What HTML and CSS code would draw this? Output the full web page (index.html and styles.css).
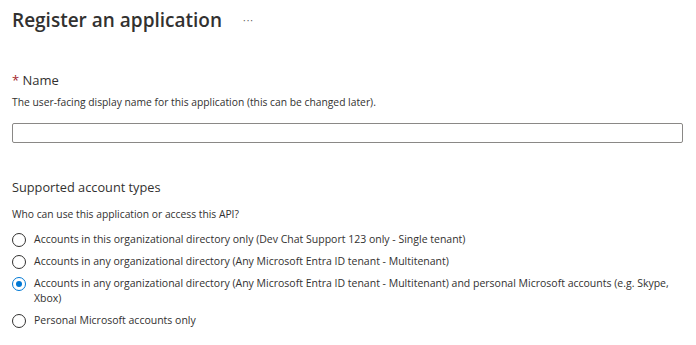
FILE: index.html
```html
<!DOCTYPE html>
<html>
<head>
    <meta charset="UTF-8">
    <title>Register an application</title>
    <link rel="stylesheet" href="styles.css">
</head>
<body>
    <div class="page">
        <div class="header">
            <h1>Register an application</h1>
            <span class="more">···</span>
        </div>

        <div class="section">
            <div class="label"><span class="req">*</span> Name</div>
            <div class="hint">The user-facing display name for this application (this can be changed later).</div>
            <input type="text" class="text-input">
        </div>

        <div class="section accounts">
            <div class="label">Supported account types</div>
            <div class="hint">Who can use this application or access this API?</div>
            <div class="radio-list">
                <label class="radio"><span class="dot"></span><span>Accounts in this organizational directory only (Dev Chat Support 123 only - Single tenant)</span></label>
                <label class="radio"><span class="dot"></span><span>Accounts in any organizational directory (Any Microsoft Entra ID tenant - Multitenant)</span></label>
                <label class="radio checked"><span class="dot"></span><span>Accounts in any organizational directory (Any Microsoft Entra ID tenant - Multitenant) and personal Microsoft accounts (e.g. Skype, Xbox)</span></label>
                <label class="radio"><span class="dot"></span><span>Personal Microsoft accounts only</span></label>
            </div>
        </div>
    </div>
</body>
</html>
```

FILE: styles.css
```css
body { margin: 0; background: #fff; font-family: "Open Sans", "Noto Sans", sans-serif; color: #323130; }
.page { padding: 0 13px 0 12px; }

.header { display: flex; align-items: center; height: 40px; }
h1 { margin: 0; font-size: 19px; font-weight: 600; color: #323130; }
.more { margin-left: 21px; font-size: 10px; color: #605e5c; letter-spacing: 1px; }

.section { margin-top: 31px; }
.label { font-size: 13px; line-height: 18px; }
.accounts .label { font-size: 12.75px; }
.req { color: #a4262c; }
.hint { font-size: 10.3px; line-height: 15px; margin-top: 6px; }
.text-input {
    display: block; box-sizing: border-box; width: 100%; height: 20px; margin-top: 13px;
    border: 1px solid #8a8886; border-radius: 2px; padding: 0 6px; font: inherit;
}

.accounts { margin-top: 35px; }
.accounts .hint { margin-top: 11px; }
.radio-list { display: flex; flex-direction: column; gap: 7px; margin-top: 10px; }
.radio { display: flex; align-items: flex-start; gap: 8px; font-size: 10.5px; line-height: 15px; }
.dot {
    flex: none; width: 14px; height: 14px; margin-top: 0.5px; box-sizing: border-box; border: 1px solid #323130;
    border-radius: 50%; display: flex; align-items: center; justify-content: center;
}
.checked .dot { border-color: #0078d4; }
.checked .dot::after { content: ""; width: 6px; height: 6px; border-radius: 50%; background: #0078d4; }
```
